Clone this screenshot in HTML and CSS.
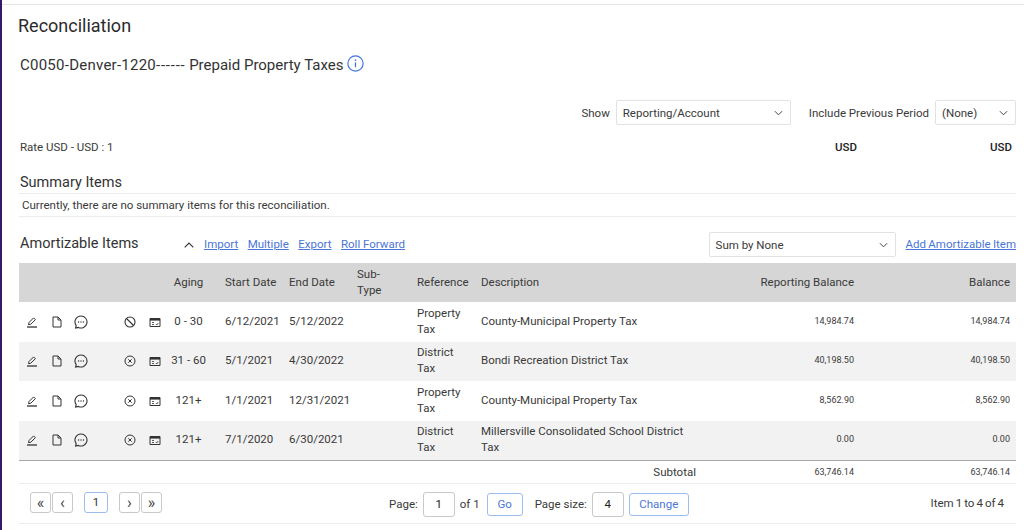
FILE: index.html
```html
<!DOCTYPE html>
<html lang="en">
<head>
<meta charset="utf-8">
<title>Reconciliation</title>
<link rel="stylesheet" href="styles.css">
</head>
<body>
<svg class="defs" width="0" height="0" aria-hidden="true">
  <defs>
    <symbol id="i-edit" viewBox="0 0 12 12"><path d="M1 11h10" stroke="currentColor" stroke-width="1.300"/><path d="M2.500 8.700l.5-2.200L7.600 1.900l1.800 1.800-4.600 4.500z" fill="none" stroke="currentColor" stroke-width="1"/></symbol>
    <symbol id="i-doc" viewBox="0 0 12 12"><path d="M2 1h5l3 3v7H2zM7 1v3h3" fill="none" stroke="currentColor" stroke-width="1"/></symbol>
    <symbol id="i-chat" viewBox="0 0 14 14"><path d="M7 1a6 6 0 1 1-2.600 11.400L1.600 13l.6-2.400A6 6 0 0 1 7 1z" fill="none" stroke="currentColor" stroke-width="1.100"/><circle cx="4.600" cy="7" r=".7" fill="currentColor"/><circle cx="7" cy="7" r=".7" fill="currentColor"/><circle cx="9.400" cy="7" r=".7" fill="currentColor"/></symbol>
    <symbol id="i-ban" viewBox="0 0 12 12"><circle cx="6" cy="6" r="5" fill="none" stroke="currentColor" stroke-width="1.100"/><path d="M2.500 2.500l7 7" stroke="currentColor" stroke-width="1.100"/></symbol>
    <symbol id="i-x" viewBox="0 0 12 12"><circle cx="6" cy="6" r="5" fill="none" stroke="currentColor" stroke-width="1"/><path d="M4.300 4.300l3.400 3.400M7.700 4.300l-3.400 3.400" stroke="currentColor" stroke-width="1"/></symbol>
    <symbol id="i-cal" viewBox="0 0 12 12"><path d="M1 2.500h10v8H1z" fill="none" stroke="currentColor" stroke-width="1"/><path d="M1 3.700h10" stroke="currentColor" stroke-width="1.800"/><path d="M3 6.500h2M3 8.500h2M6.800 8l1 1 1.500-2" fill="none" stroke="currentColor" stroke-width=".8"/></symbol>
    <symbol id="i-chev" viewBox="0 0 10 6"><path d="M1 1l4 4 4-4" fill="none" stroke="currentColor" stroke-width="1.100"/></symbol>
  </defs>
</svg>
<div class="page">
  <h1 class="title">Reconciliation</h1>
  <div class="subtitle">
    <span><span class="sub-code">C0050-Denver-1220</span><span class="sub-dash">------</span> Prepaid Property Taxes</span>
    <svg class="info" viewBox="0 0 16 16"><circle cx="8" cy="8" r="7.200" fill="none" stroke="currentColor" stroke-width="1.100"/><path d="M8 7v4.500" stroke="currentColor" stroke-width="1.200"/><circle cx="8" cy="4.800" r=".8" fill="currentColor"/></svg>
  </div>
  <div class="filters">
    <span>Show</span>
    <div class="select select-show"><span>Reporting/Account</span><svg class="chev"><use href="#i-chev"/></svg></div>
    <span class="filter-label">Include Previous Period</span>
    <div class="select select-prev"><span>(None)</span><svg class="chev"><use href="#i-chev"/></svg></div>
  </div>
  <div class="rate-row">
    <span class="rate">Rate USD - USD : 1</span>
    <b class="usd usd-a">USD</b>
    <b class="usd usd-b">USD</b>
  </div>
  <h2 class="section-title summary-title">Summary Items</h2>
  <div class="summary-empty">Currently, there are no summary items for this reconciliation.</div>
  <div class="amort-head">
    <h2 class="section-title">Amortizable Items</h2>
    <svg class="collapse" viewBox="0 0 10 6"><path d="M.7 5.300L5 1l4.300 4.300" fill="none" stroke="currentColor" stroke-width="1.100"/></svg>
    <a class="link" href="#">Import</a>
    <a class="link" href="#">Multiple</a>
    <a class="link" href="#">Export</a>
    <a class="link" href="#">Roll Forward</a>
    <div class="select select-sum"><span>Sum by None</span><svg class="chev"><use href="#i-chev"/></svg></div>
    <a class="link" href="#">Add Amortizable Item</a>
  </div>
  <table class="grid">
    <colgroup>
      <col class="c-edit"><col class="c-doc"><col class="c-chat"><col class="c-gap"><col class="c-status"><col class="c-cal"><col class="c-aging"><col class="c-start"><col class="c-end"><col class="c-sub"><col class="c-ref"><col class="c-desc"><col class="c-rep"><col class="c-bal">
    </colgroup>
    <thead>
      <tr>
        <th></th><th></th><th></th><th></th><th></th><th></th>
        <th class="aging">Aging</th><th>Start Date</th><th>End Date</th><th>Sub-<br>Type</th><th>Reference</th><th>Description</th>
        <th class="num">Reporting Balance</th><th class="num">Balance</th>
      </tr>
    </thead>
    <tbody>
      <tr>
        <td class="ic"><svg class="i12"><use href="#i-edit"/></svg></td><td class="ic"><svg class="i12"><use href="#i-doc"/></svg></td><td class="ic"><svg class="i14"><use href="#i-chat"/></svg></td><td></td><td class="ic"><svg class="i12"><use href="#i-ban"/></svg></td><td class="ic"><svg class="i12"><use href="#i-cal"/></svg></td>
        <td class="aging">0 - 30</td><td>6/12/2021</td><td>5/12/2022</td><td></td><td>Property Tax</td><td>County-Municipal Property Tax</td><td class="num amt">14,984.74</td><td class="num amt">14,984.74</td>
      </tr>
      <tr>
        <td class="ic"><svg class="i12"><use href="#i-edit"/></svg></td><td class="ic"><svg class="i12"><use href="#i-doc"/></svg></td><td class="ic"><svg class="i14"><use href="#i-chat"/></svg></td><td></td><td class="ic"><svg class="i12"><use href="#i-x"/></svg></td><td class="ic"><svg class="i12"><use href="#i-cal"/></svg></td>
        <td class="aging">31 - 60</td><td>5/1/2021</td><td>4/30/2022</td><td></td><td>District Tax</td><td>Bondi Recreation District Tax</td><td class="num amt">40,198.50</td><td class="num amt">40,198.50</td>
      </tr>
      <tr>
        <td class="ic"><svg class="i12"><use href="#i-edit"/></svg></td><td class="ic"><svg class="i12"><use href="#i-doc"/></svg></td><td class="ic"><svg class="i14"><use href="#i-chat"/></svg></td><td></td><td class="ic"><svg class="i12"><use href="#i-x"/></svg></td><td class="ic"><svg class="i12"><use href="#i-cal"/></svg></td>
        <td class="aging">121+</td><td>1/1/2021</td><td>12/31/2021</td><td></td><td>Property Tax</td><td>County-Municipal Property Tax</td><td class="num amt">8,562.90</td><td class="num amt">8,562.90</td>
      </tr>
      <tr>
        <td class="ic"><svg class="i12"><use href="#i-edit"/></svg></td><td class="ic"><svg class="i12"><use href="#i-doc"/></svg></td><td class="ic"><svg class="i14"><use href="#i-chat"/></svg></td><td></td><td class="ic"><svg class="i12"><use href="#i-x"/></svg></td><td class="ic"><svg class="i12"><use href="#i-cal"/></svg></td>
        <td class="aging">121+</td><td>7/1/2020</td><td>6/30/2021</td><td></td><td>District Tax</td><td>Millersville Consolidated School District Tax</td><td class="num amt">0.00</td><td class="num amt">0.00</td>
      </tr>
    </tbody>
    <tfoot>
      <tr>
        <td colspan="12" class="subtotal">Subtotal</td><td class="num amt">63,746.14</td><td class="num amt">63,746.14</td>
      </tr>
    </tfoot>
  </table>
  <div class="pager">
    <div class="pager-nav">
      <button class="pg">«</button><button class="pg">‹</button>
      <button class="pg pg-current">1</button>
      <button class="pg">›</button><button class="pg">»</button>
    </div>
    <div class="pager-mid">
      <span>Page:</span><span class="box">1</span><span>of 1</span><button class="btn btn-go">Go</button>
      <span class="ps">Page size:</span><span class="box">4</span><button class="btn btn-change">Change</button>
    </div>
    <div class="pager-info">Item 1 to 4 of 4</div>
  </div>
</div>
</body>
</html>
```
FILE: styles.css
```css
* { box-sizing: border-box; }
html, body { margin: 0; height: 530px; overflow: hidden; }
body {
  background: #fff;
  color: #3a3a3a;
  font-family: "Roboto", "Liberation Sans", sans-serif;
  font-size: 11.500px;
  border-left: 2px solid #33186b;
}
.defs { display: block; height: 0; }
.page {
  margin-top: 4px;
  border-top: 1px solid #e4e4e4;
  padding: 0 8px 0 17px;
}
.title { margin: 10px 0 0 -1px; font-size: 18px; line-height: 22px; font-weight: 400; color: #2b2b2b; }
.subtitle { margin: 17px 0 0 1px; display: flex; align-items: center; gap: 5px; font-size: 15px; line-height: 22px; color: #333; }
.sub-code { letter-spacing: .25px; }
.sub-dash { letter-spacing: .75px; }
.info { width: 17px; height: 17px; color: #3f74dc; margin-top: -4px; margin-left: -1px; }
.filters { margin-top: 24px; display: flex; justify-content: flex-end; align-items: center; height: 25px; }
.select {
  display: flex; align-items: center; justify-content: space-between;
  height: 25px; padding: 0 6px;
  border: 1px solid #e2e2e2; border-radius: 2px; background: #fff;
}
.select-show { width: 175px; margin-left: 6px; }
.filter-label { margin-left: 18px; }
.select-prev { width: 81px; margin-left: 6px; }
.select-sum { width: 187px; margin-left: auto; margin-right: 10px; }
.chev { width: 9px; height: 6px; color: #444; margin-right: 1px; }
.rate-row { margin-top: 14px; padding-left: 1px; display: flex; line-height: 16px; }
.usd { font-weight: 500; color: #222; }
.usd-a { margin-left: auto; }
.usd-b { margin-left: 133px; margin-right: 4px; }
.section-title { margin: 0; font-size: 14.500px; line-height: 18px; font-weight: 400; color: #333; }
.summary-title { margin: 19px 0 0 1px; padding-bottom: 1px; }
.summary-empty { border-top: 1px solid #ececec; border-bottom: 1px solid #ececec; padding: 0 3px; height: 24px; line-height: 23px; }
.amort-head { display: flex; align-items: center; margin: 15px 0 6px 1px; height: 25px; }
.amort-head .section-title { width: 164px; margin-top: -1px; }
.collapse { width: 10px; height: 6px; color: #333; margin-right: 10px; }
.link { color: #4a76d6; text-decoration: underline; margin: 0 9.500px 2px 0; }
.amort-head .link:last-child { margin-right: 0; word-spacing: -.5px; }
.grid { width: 997px; table-layout: fixed; border-collapse: collapse; }
.c-edit { width: 26px; } .c-doc { width: 24px; } .c-chat { width: 24px; } .c-gap { width: 25px; }
.c-status { width: 24px; } .c-cal { width: 26px; } .c-aging { width: 51px; } .c-start { width: 64px; }
.c-end { width: 68px; } .c-sub { width: 60px; } .c-ref { width: 64px; } .c-desc { width: 225px; }
.c-rep { width: 160px; } .c-bal { width: 156px; }
.grid th { background: #d6d6d6; height: 39px; font-weight: 400; text-align: left; padding: 0 6px 2px; line-height: 16px; color: #3a3a3a; }
.grid td { height: 39.500px; padding: 0 6px 2px; line-height: 16px; }
.grid tbody tr:nth-child(even) td { background: #f2f2f2; }
.grid tbody tr:last-child td { border-bottom: 1px solid #a8a8a8; }
.grid tfoot td { height: 23px; border-bottom: 1px solid #ececec; padding-bottom: 0; }
.grid .aging { text-align: center; padding: 0 10px 2px 0; }
.grid .num { text-align: right; }
.grid .amt { font-size: 9px; }
.grid .subtotal { text-align: right; padding-right: 4px; }
.grid .ic { padding: 0 0 2px; text-align: center; color: #333; }
.i12 { width: 12px; height: 12px; vertical-align: middle; }
.i14 { width: 14px; height: 14px; vertical-align: middle; }
.pager { width: 997px; height: 40px; display: flex; align-items: center; border-bottom: 1px solid #ececec; }
.pager-nav { display: flex; align-items: center; margin-left: 11px; gap: 1px; margin-top: -2px; }
.pg { width: 21px; height: 21px; padding: 0; border: 1px solid #c9c9c9; border-radius: 3px; background: #fff; color: #444; font: inherit; font-size: 16px; line-height: 17px; }
.pg-current { width: 24px; margin: 0 10px; border-color: #9dbcf0; font-size: 11.500px; color: #333; }
.pager-mid { display: flex; align-items: center; margin-left: 227px; margin-top: 2px; }
.box { width: 32px; height: 25px; display: flex; align-items: center; justify-content: center; border: 1px solid #c9c9c9; border-radius: 3px; margin: 0 5px; color: #222; }
.btn { height: 23px; padding: 0; border: 1px solid #9dbcf0; border-radius: 3px; background: #fff; color: #4a76d6; font: inherit; }
.btn-go { width: 36px; margin-left: 7px; }
.btn-change { width: 60px; }
.ps { margin-left: 12px; }
.pager-info { margin-left: auto; margin-right: 12px; word-spacing: -.8px; }
```
